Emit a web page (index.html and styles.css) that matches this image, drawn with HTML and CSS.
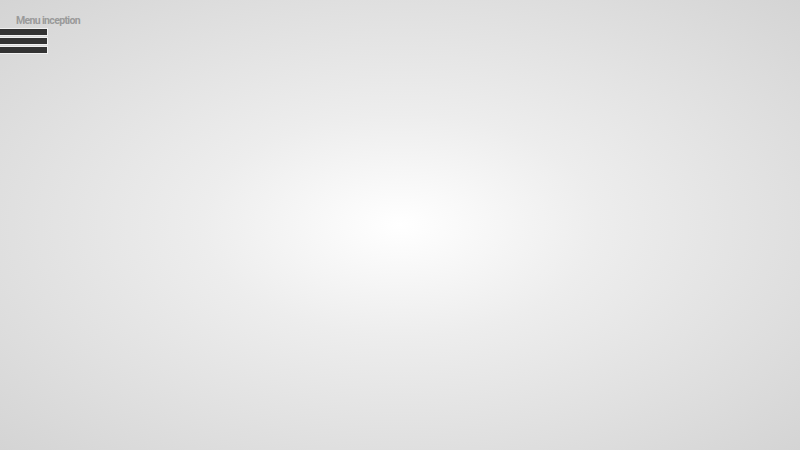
FILE: index.html
```html
<!DOCTYPE html>
<html>
<head>
<meta charset="utf-8">
<link rel="stylesheet" href="styles.css">
</head>
<body>
<header class="top">
  <h1 class="title">Menu inception</h1>
  <button class="burger" aria-label="Menu">
    <span class="bar"></span>
    <span class="bar"></span>
    <span class="bar"></span>
  </button>
</header>
</body>
</html>
```
FILE: styles.css
```css
html, body {
  margin: 0;
  padding: 0;
  width: 100%;
  height: 100%;
}
body {
  background: radial-gradient(ellipse at center, #ffffff 0%, #ededed 35%, #d4d4d4 100%);
  font-family: "Liberation Sans", Arial, sans-serif;
  overflow: hidden;
}
.top {
  display: flex;
  flex-direction: column;
  align-items: flex-start;
  padding-top: 15px;
}
.title {
  margin: 0 0 0 16px;
  font-family: Roboto, "Liberation Sans", Arial, sans-serif;
  font-size: 10.5px;
  line-height: 12px;
  font-weight: bold;
  letter-spacing: -0.65px;
  color: #9a9a9a;
}
.burger {
  margin-top: 2px;
  padding: 0;
  border: 0;
  background: none;
  display: flex;
  flex-direction: column;
  gap: 3px;
}
.bar {
  display: block;
  width: 47px;
  height: 6px;
  background: #333333;
  box-shadow: 0 0 0 1px rgba(255,255,255,0.6);
}
```
